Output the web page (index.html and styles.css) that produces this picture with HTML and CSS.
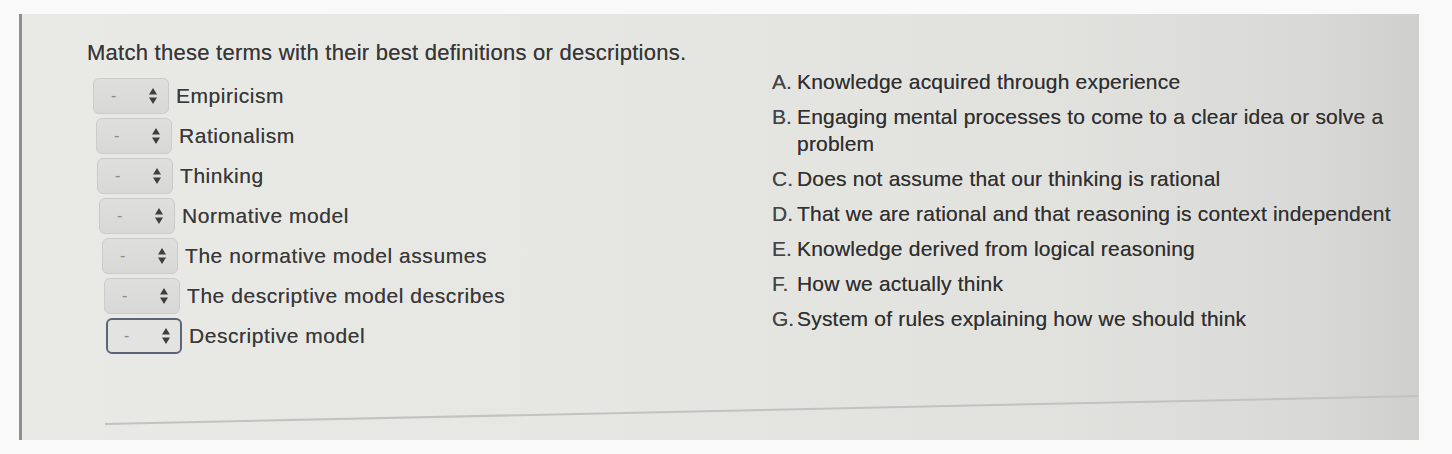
FILE: index.html
```html
<!DOCTYPE html>
<html lang="en">
<head>
<meta charset="utf-8">
<title>Matching question</title>
<link rel="stylesheet" href="styles.css">
</head>
<body>
<div class="photo">
  <p class="prompt">Match these terms with their best definitions or descriptions.</p>
  <div class="columns">
    <ul class="terms">
      <li class="term"><span class="select"><span class="dash">-</span><svg class="arrows" width="10" height="18" viewBox="0 0 10 18"><path d="M5 1 L9 7.5 L1 7.5 Z M5 17 L9 10.5 L1 10.5 Z"/></svg></span><span class="label">Empiricism</span></li>
      <li class="term"><span class="select"><span class="dash">-</span><svg class="arrows" width="10" height="18" viewBox="0 0 10 18"><path d="M5 1 L9 7.5 L1 7.5 Z M5 17 L9 10.5 L1 10.5 Z"/></svg></span><span class="label">Rationalism</span></li>
      <li class="term"><span class="select"><span class="dash">-</span><svg class="arrows" width="10" height="18" viewBox="0 0 10 18"><path d="M5 1 L9 7.5 L1 7.5 Z M5 17 L9 10.5 L1 10.5 Z"/></svg></span><span class="label">Thinking</span></li>
      <li class="term"><span class="select"><span class="dash">-</span><svg class="arrows" width="10" height="18" viewBox="0 0 10 18"><path d="M5 1 L9 7.5 L1 7.5 Z M5 17 L9 10.5 L1 10.5 Z"/></svg></span><span class="label">Normative model</span></li>
      <li class="term"><span class="select"><span class="dash">-</span><svg class="arrows" width="10" height="18" viewBox="0 0 10 18"><path d="M5 1 L9 7.5 L1 7.5 Z M5 17 L9 10.5 L1 10.5 Z"/></svg></span><span class="label">The normative model assumes</span></li>
      <li class="term"><span class="select"><span class="dash">-</span><svg class="arrows" width="10" height="18" viewBox="0 0 10 18"><path d="M5 1 L9 7.5 L1 7.5 Z M5 17 L9 10.5 L1 10.5 Z"/></svg></span><span class="label">The descriptive model describes</span></li>
      <li class="term"><span class="select focused"><span class="dash">-</span><svg class="arrows" width="10" height="18" viewBox="0 0 10 18"><path d="M5 1 L9 7.5 L1 7.5 Z M5 17 L9 10.5 L1 10.5 Z"/></svg></span><span class="label">Descriptive model</span></li>
    </ul>
    <ol class="defs">
      <li class="def"><span class="letter">A.</span><span class="text">Knowledge acquired through experience</span></li>
      <li class="def"><span class="letter">B.</span><span class="text">Engaging mental processes to come to a clear idea or solve a problem</span></li>
      <li class="def"><span class="letter">C.</span><span class="text">Does not assume that our thinking is rational</span></li>
      <li class="def"><span class="letter">D.</span><span class="text">That we are rational and that reasoning is context independent</span></li>
      <li class="def"><span class="letter">E.</span><span class="text">Knowledge derived from logical reasoning</span></li>
      <li class="def"><span class="letter">F.</span><span class="text">How we actually think</span></li>
      <li class="def"><span class="letter">G.</span><span class="text">System of rules explaining how we should think</span></li>
    </ol>
  </div>
  <div class="rule"></div>
</div>
</body>
</html>
```

FILE: styles.css
```css
html, body {
  margin: 0;
  padding: 0;
  background: #f9f9f9;
}

body {
  font-family: "Liberation Sans", Arial, sans-serif;
  color: #333;
}

.photo {
  box-sizing: border-box;
  margin: 14px 0 0 19px;
  width: 1400px;
  height: 426px;
  border-left: 3px solid #8f8f8f;
  background: linear-gradient(90deg, #e9e9e6 0%, #e6e6e3 40%, #e1e1de 75%, #d9d9d7 92%, #cfcfce 100%);
  display: flex;
  flex-direction: column;
  padding: 27px 0 0 65px;
}

.prompt {
  margin: 0;
  font-size: 22px;
  line-height: 24px;
  color: #363636;
  letter-spacing: 0.26px;
  text-shadow: 0 0 0.6px rgba(40, 40, 40, 0.6);
}

.columns {
  display: flex;
  align-items: flex-start;
  margin-top: 3px;
}

.terms {
  list-style: none;
  margin: 0;
  padding: 10px 0 0 0;
  width: 685px;
  display: flex;
  flex-direction: column;
  gap: 4px;
}

.term {
  display: flex;
  align-items: center;
  height: 36px;
  gap: 7px;
  margin-left: 6px;
}
.term:nth-child(2) { margin-left: 9px; }
.term:nth-child(3) { margin-left: 10px; }
.term:nth-child(4) { margin-left: 12px; }
.term:nth-child(5) { margin-left: 15px; }
.term:nth-child(6) { margin-left: 17px; }
.term:nth-child(7) { margin-left: 19px; }

.select {
  box-sizing: border-box;
  width: 76px;
  height: 36px;
  border: 1px solid #cbcbc9;
  border-radius: 6px;
  background: linear-gradient(180deg, #dfdfdd 0%, #d8d8d6 100%);
  display: flex;
  align-items: center;
  justify-content: space-between;
  padding: 0 10px 0 17px;
}

.select.focused {
  border: 2px solid #5b6478;
  background: #e3e3e2;
  padding: 0 9px 0 16px;
}

.dash {
  color: #8a8a8a;
  font-size: 16px;
  line-height: 1;
}

.arrows {
  fill: #3f3f3f;
}

.label {
  font-size: 21px;
  line-height: 24px;
  color: #383838;
  letter-spacing: 0.55px;
  text-shadow: 0 0 0.6px rgba(40, 40, 40, 0.6);
}

.defs {
  list-style: none;
  margin: 0;
  padding: 0;
  display: flex;
  flex-direction: column;
  gap: 8px;
}

.def {
  display: flex;
  align-items: flex-start;
  font-size: 21px;
  line-height: 27px;
  color: #2f2f2f;
  text-shadow: 0 0 0.6px rgba(30, 30, 30, 0.6);
}

.letter {
  width: 25px;
  flex: none;
  color: #444;
}

.text {
  width: 605px;
  letter-spacing: 0.2px;
}

.rule {
  margin: auto 0 15px 18px;
  width: 1313px;
  height: 2px;
  background: #c2c2c0;
  transform-origin: left center;
  transform: rotate(-1.22deg);
}
```
